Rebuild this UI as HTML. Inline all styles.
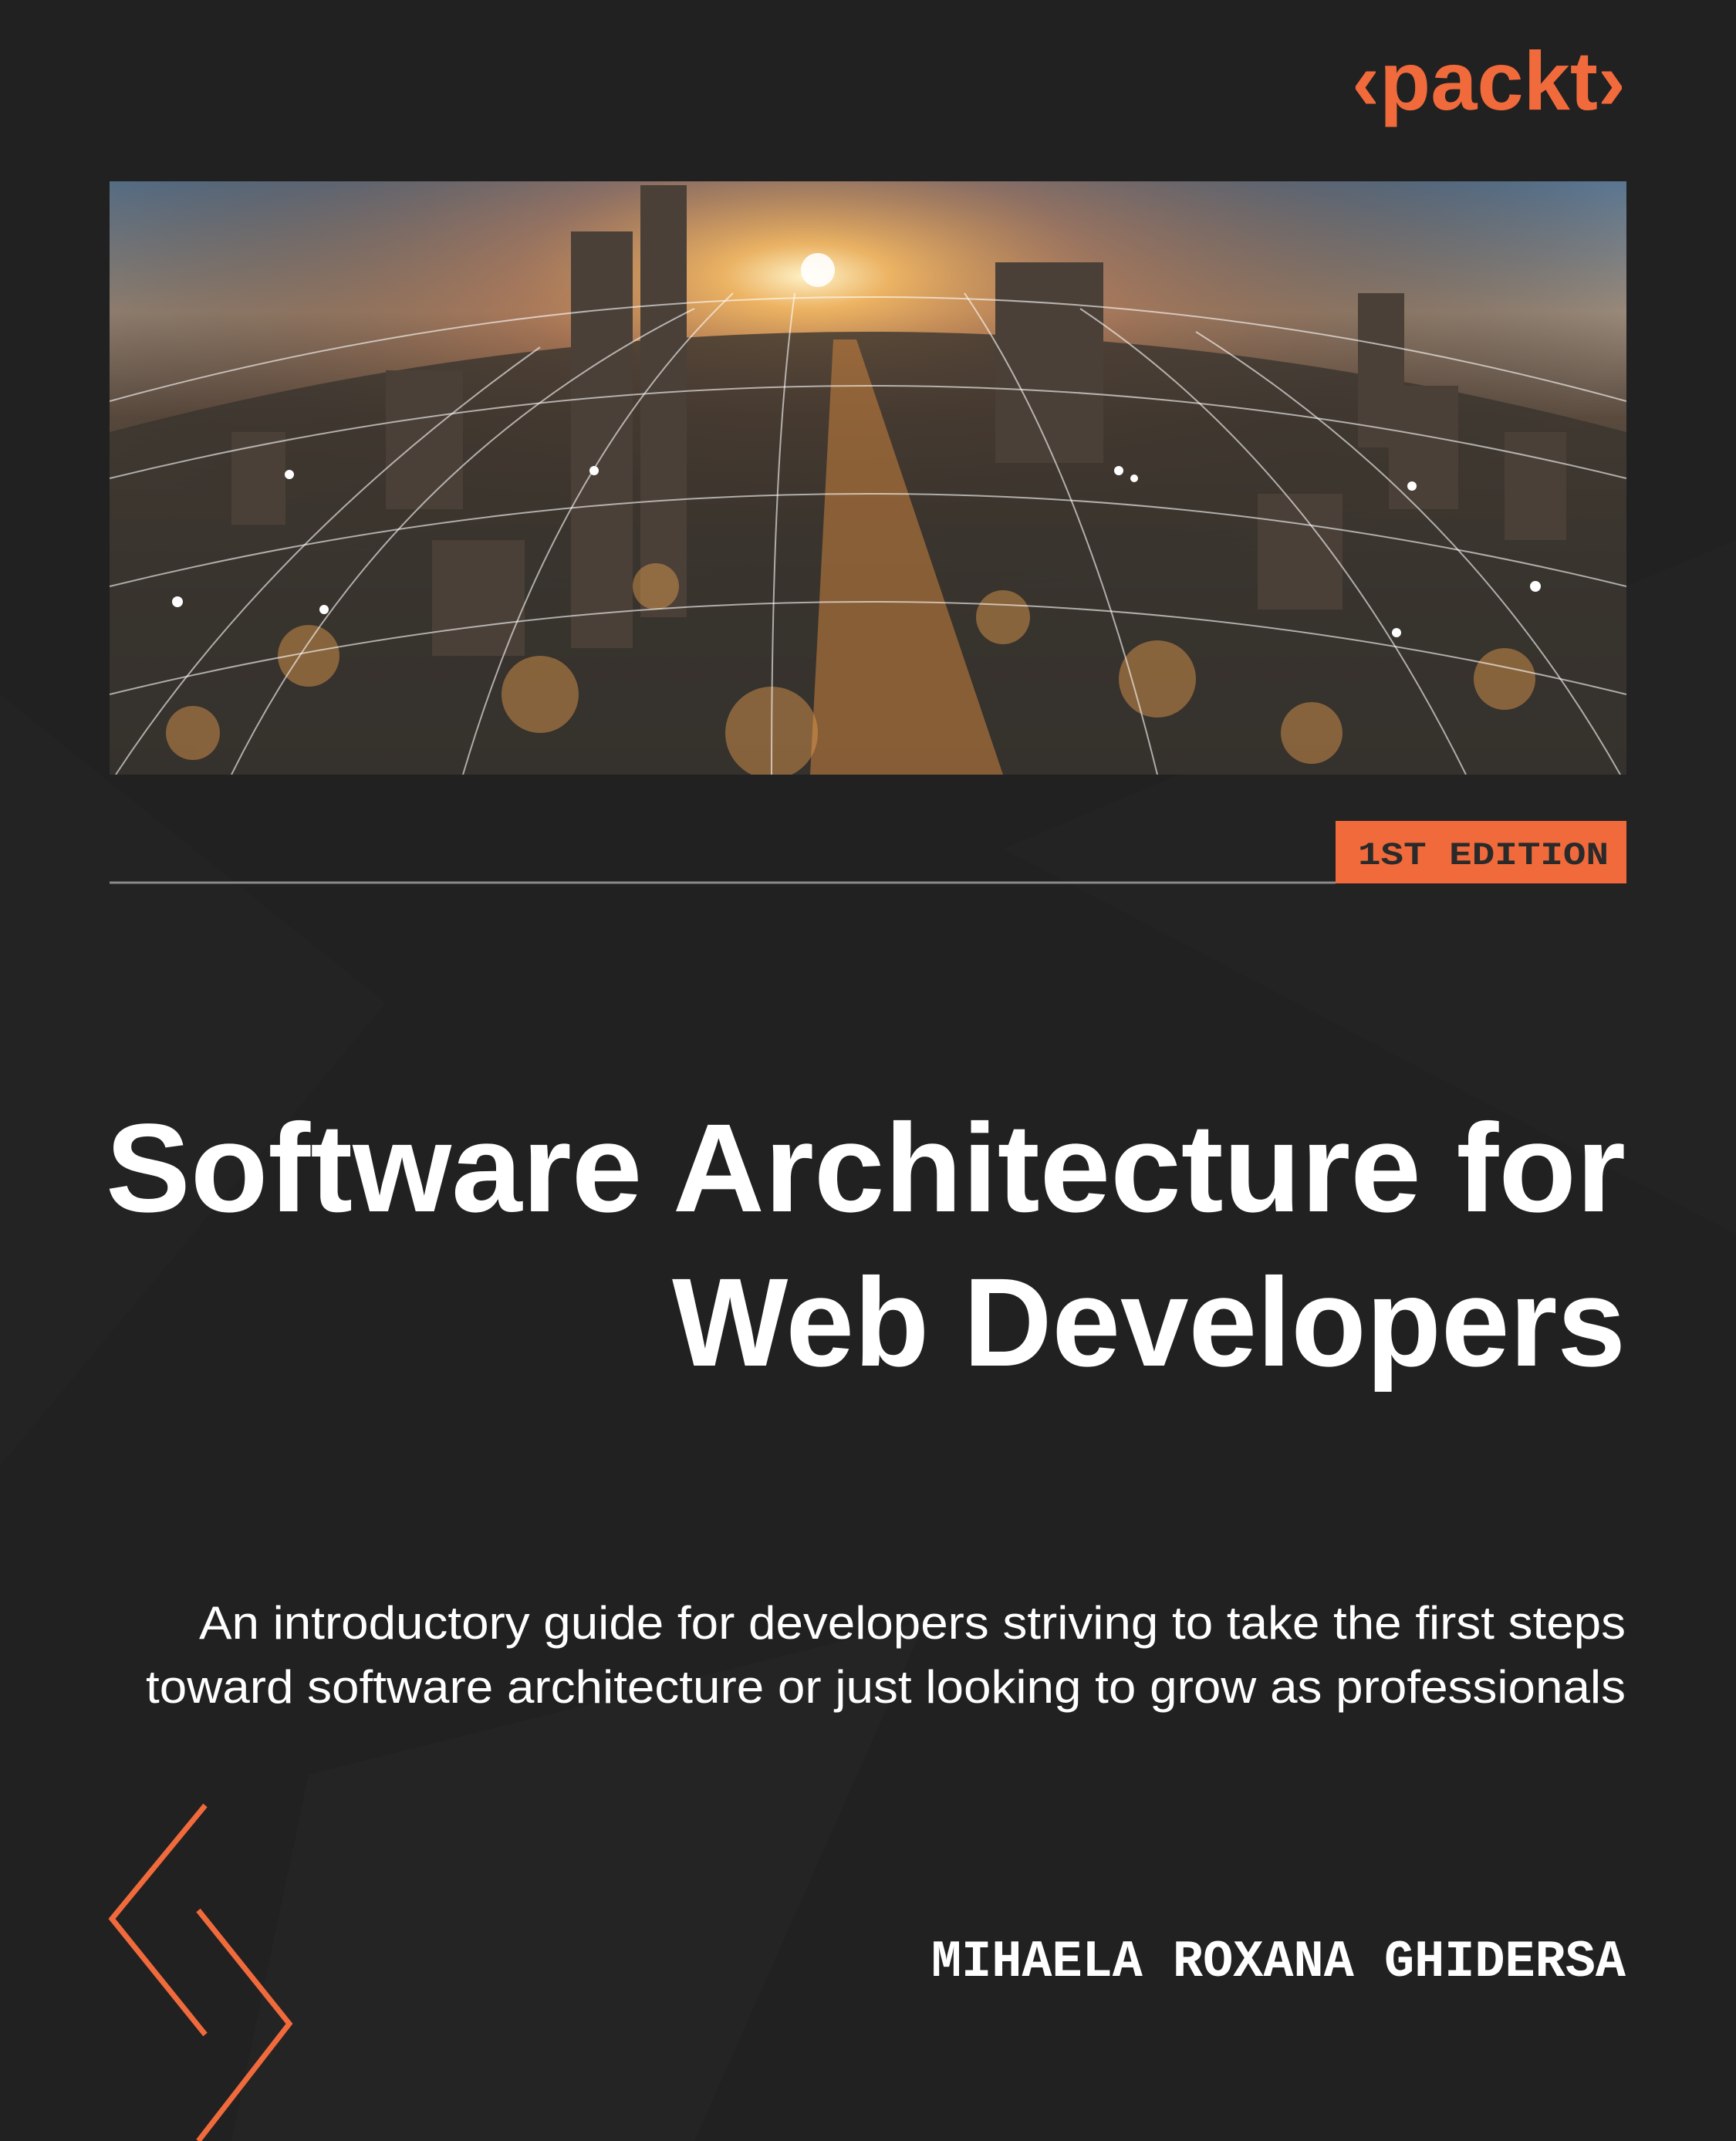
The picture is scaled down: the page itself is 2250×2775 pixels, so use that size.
<!DOCTYPE html>
<html><head><meta charset="utf-8">
<style>
html,body{margin:0;padding:0;background:#212121;}
body{width:2250px;height:2775px;overflow:hidden;position:relative;}
svg{position:absolute;left:0;top:0;}
</style></head>
<body>
<svg width="2250" height="2775" viewBox="0 0 2250 2775" xmlns="http://www.w3.org/2000/svg">
<defs>
<linearGradient id="sky" x1="0" y1="0" x2="0" y2="1">
<stop offset="0" stop-color="#5a7590"/><stop offset="0.22" stop-color="#9a8a7a"/>
<stop offset="0.4" stop-color="#5a4a3e"/><stop offset="0.7" stop-color="#33302c"/><stop offset="1" stop-color="#262626"/>
</linearGradient>
<radialGradient id="sun" cx="0.46" cy="0.16" r="0.55">
<stop offset="0" stop-color="#fff3c8" stop-opacity="1"/><stop offset="0.1" stop-color="#f6b860" stop-opacity="0.9"/>
<stop offset="0.35" stop-color="#b8683a" stop-opacity="0.5"/><stop offset="1" stop-color="#000" stop-opacity="0"/>
</radialGradient>
<clipPath id="ic"><rect x="142" y="235" width="1966" height="769"/></clipPath>
</defs>
<rect width="2250" height="2775" fill="#212121"/>
<polygon points="0,900 500,1300 0,1900" fill="#232323"/>
<polygon points="1300,1100 2250,700 2250,1600" fill="#232323"/>
<polygon points="400,2300 1200,2100 900,2775 300,2775" fill="#242424"/>
<g clip-path="url(#ic)">
<rect x="142" y="235" width="1966" height="769" fill="url(#sky)"/>
<rect x="142" y="235" width="1966" height="769" fill="url(#sun)"/>
<path d="M142,560 Q1125,300 2108,560 L2108,1004 L142,1004Z" fill="#3a342e" opacity="0.8"/>
<path d="M1050,1004 L1080,440 L1110,440 L1300,1004Z" fill="#d88a40" opacity="0.5"/>
<g fill="#4a4038">
<rect x="740" y="300" width="80" height="540"/><rect x="830" y="240" width="60" height="560"/>
<rect x="1290" y="340" width="140" height="260"/><rect x="1630" y="640" width="110" height="150"/>
<rect x="500" y="480" width="100" height="180"/><rect x="1760" y="380" width="60" height="200"/>
<rect x="560" y="700" width="120" height="150"/><rect x="1800" y="500" width="90" height="160"/>
<rect x="300" y="560" width="70" height="120"/><rect x="1950" y="560" width="80" height="140"/>
</g>
<g fill="#e8a050" opacity="0.45">
<circle cx="400" cy="850" r="40"/><circle cx="700" cy="900" r="50"/><circle cx="1500" cy="880" r="50"/><circle cx="1700" cy="950" r="40"/><circle cx="1000" cy="950" r="60"/>
<circle cx="250" cy="950" r="35"/><circle cx="1300" cy="800" r="35"/><circle cx="1950" cy="880" r="40"/><circle cx="850" cy="760" r="30"/>
</g>
<g stroke="#ffffff" stroke-opacity="0.6" stroke-width="2" fill="none">
<path d="M142,520 Q1125,250 2108,520"/><path d="M142,620 Q1125,380 2108,620"/>
<path d="M142,760 Q1125,520 2108,760"/><path d="M142,900 Q1125,660 2108,900"/>
<path d="M300,1004 Q500,600 900,400"/><path d="M600,1004 Q720,600 950,380"/>
<path d="M1000,1004 Q1000,600 1030,380"/><path d="M1500,1004 Q1400,600 1250,380"/>
<path d="M1900,1004 Q1700,600 1400,400"/><path d="M150,1004 Q350,700 700,450"/><path d="M2100,1004 Q1900,650 1550,430"/>
</g>
<g fill="#fff">
<circle cx="375" cy="615" r="6"/><circle cx="770" cy="610" r="6"/><circle cx="1450" cy="610" r="6"/><circle cx="1830" cy="630" r="6"/>
<circle cx="230" cy="780" r="7"/><circle cx="1990" cy="760" r="7"/><circle cx="1060" cy="350" r="22" opacity="0.9"/>
<circle cx="420" cy="790" r="6"/><circle cx="1810" cy="820" r="6"/><circle cx="1470" cy="620" r="5"/>
</g>
</g>
<text x="1752" y="142" textLength="355" lengthAdjust="spacingAndGlyphs" font-family="Liberation Sans, sans-serif" font-weight="bold" font-size="108" fill="#f06a3c">‹packt›</text>
<line x1="142" y1="1144" x2="1731" y2="1144" stroke="#8a8a8a" stroke-width="3"/>
<rect x="1731" y="1064" width="377" height="81" fill="#f06a3c"/>
<text x="1760" y="1120" textLength="325" lengthAdjust="spacingAndGlyphs" font-family="Liberation Mono, monospace" font-weight="bold" font-size="42" fill="#2a2a2a">1ST EDITION</text>
<text x="137" y="1570" textLength="1970" lengthAdjust="spacingAndGlyphs" font-family="Liberation Sans, sans-serif" font-weight="bold" font-size="163" fill="#ffffff">Software Architecture for</text>
<text x="871" y="1770" textLength="1236" lengthAdjust="spacingAndGlyphs" font-family="Liberation Sans, sans-serif" font-weight="bold" font-size="163" fill="#ffffff">Web Developers</text>
<text x="258" y="2124" textLength="1849" lengthAdjust="spacingAndGlyphs" font-family="Liberation Sans, sans-serif" font-size="60" fill="#ffffff">An introductory guide for developers striving to take the first steps</text>
<text x="189" y="2207" textLength="1918" lengthAdjust="spacingAndGlyphs" font-family="Liberation Sans, sans-serif" font-size="60" fill="#ffffff">toward software architecture or just looking to grow as professionals</text>
<text x="1207" y="2561" textLength="900" lengthAdjust="spacingAndGlyphs" font-family="Liberation Mono, monospace" font-weight="bold" font-size="68" fill="#ffffff">MIHAELA ROXANA GHIDERSA</text>
<g stroke="#f06a3c" stroke-width="7" fill="none">
<polyline points="266,2340 145,2487 266,2637"/>
<polyline points="257,2476 375,2623 257,2775"/>
</g>
</svg>
</body></html>
